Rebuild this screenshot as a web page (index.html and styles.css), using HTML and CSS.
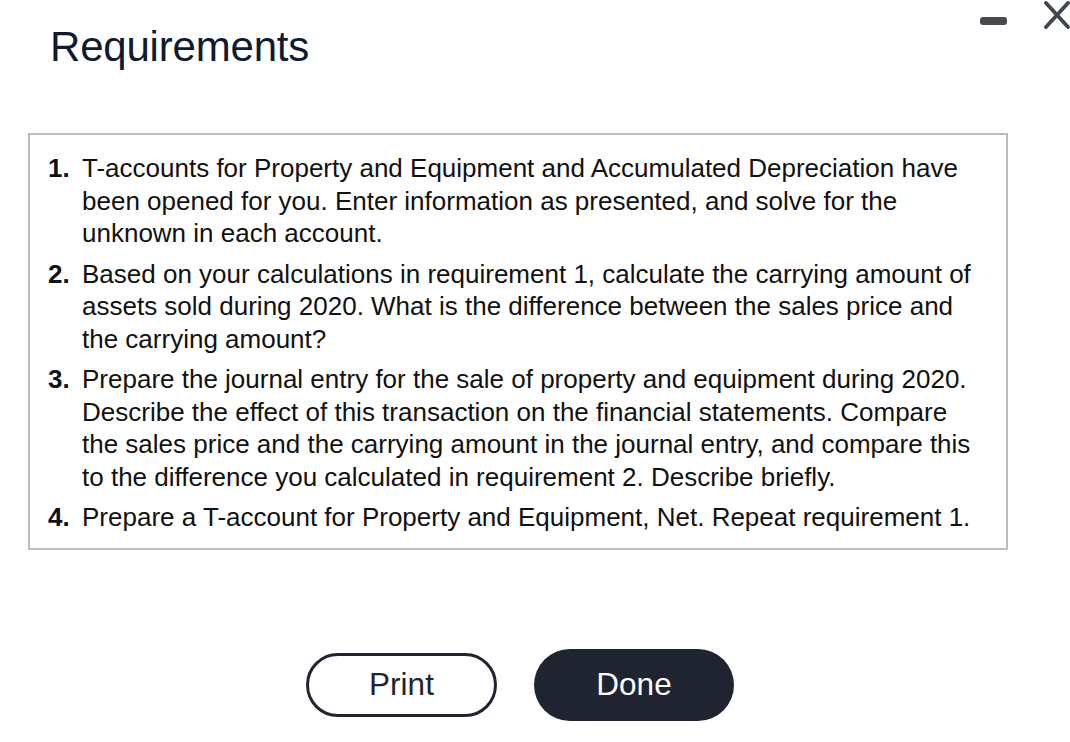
FILE: index.html
```html
<!DOCTYPE html>
<html>
<head>
<meta charset="utf-8">
<link rel="stylesheet" href="styles.css">
</head>
<body>
<div class="dialog">
  <div class="window-controls">
    <span class="minimize"></span>
    <svg class="close" width="26" height="28" viewBox="0 0 26 28"><path d="M2 2 L24 26 M24 2 L2 26" stroke="#3f4651" stroke-width="3.8" stroke-linecap="round" fill="none"/></svg>
  </div>
  <h1 class="title">Requirements</h1>
  <div class="req-box">
    <ol class="req-list">
      <li class="req-item"><span class="num">1.</span><span class="txt">T-accounts for Property and Equipment and Accumulated Depreciation have been opened for you. Enter information as presented, and solve for the unknown in each account.</span></li>
      <li class="req-item"><span class="num">2.</span><span class="txt">Based on your calculations in requirement 1, calculate the carrying amount of assets sold during 2020. What is the difference between the sales price and the carrying amount?</span></li>
      <li class="req-item"><span class="num">3.</span><span class="txt">Prepare the journal entry for the sale of property and equipment during 2020. Describe the effect of this transaction on the financial statements. Compare the sales price and the carrying amount in the journal entry, and compare this to the difference you calculated in requirement 2. Describe briefly.</span></li>
      <li class="req-item"><span class="num">4.</span><span class="txt">Prepare a T-account for Property and Equipment, Net. Repeat requirement 1.</span></li>
    </ol>
  </div>
  <div class="actions">
    <button class="btn btn-print">Print</button>
    <button class="btn btn-done">Done</button>
  </div>
</div>
</body>
</html>
```

FILE: styles.css
```css
html, body {
  margin: 0;
  padding: 0;
  background: #ffffff;
}
body {
  font-family: "Liberation Sans", Arial, Helvetica, sans-serif;
  width: 1070px;
  height: 742px;
  overflow: hidden;
}
.dialog {
  position: relative;
  padding: 0 0 0 28px;
}
.window-controls {
  position: absolute;
  top: 1px;
  right: 0;
  display: flex;
  align-items: flex-start;
  gap: 37px;
}
.minimize {
  display: block;
  width: 27px;
  height: 8px;
  margin-top: 16px;
  border-radius: 3px;
  background: #464a50;
}
.close {
  display: block;
}
.title {
  margin: 0;
  padding: 24px 0 0 22px;
  height: 133px;
  box-sizing: border-box;
  font-size: 42px;
  font-weight: 400;
  line-height: 46px;
  color: #111a2e;
  letter-spacing: -0.2px;
}
.req-box {
  width: 980px;
  box-sizing: border-box;
  border: 2px solid #bdbdbd;
  padding: 17px 28px 14px 18px;
}
.req-list {
  list-style: none;
  margin: 0;
  padding: 0;
  display: flex;
  flex-direction: column;
  gap: 8px;
}
.req-item {
  display: grid;
  grid-template-columns: 34px 1fr;
  font-size: 26px;
  line-height: 32.5px;
  color: #111111;
}
.num {
  font-weight: 700;
}
.actions {
  width: 980px;
  box-sizing: border-box;
  padding-left: 4px;
  display: flex;
  justify-content: center;
  align-items: center;
  gap: 37px;
  margin-top: 99px;
}
.btn {
  font-family: "Liberation Sans", Arial, Helvetica, sans-serif;
  font-size: 31.5px;
  border-radius: 36px;
  cursor: pointer;
}
.btn-print {
  width: 191px;
  height: 64px;
  background: #ffffff;
  color: #1f2430;
  border: 3px solid #1f2430;
}
.btn-done {
  width: 200px;
  height: 72px;
  background: #1f2430;
  color: #ffffff;
  border: none;
}
```
